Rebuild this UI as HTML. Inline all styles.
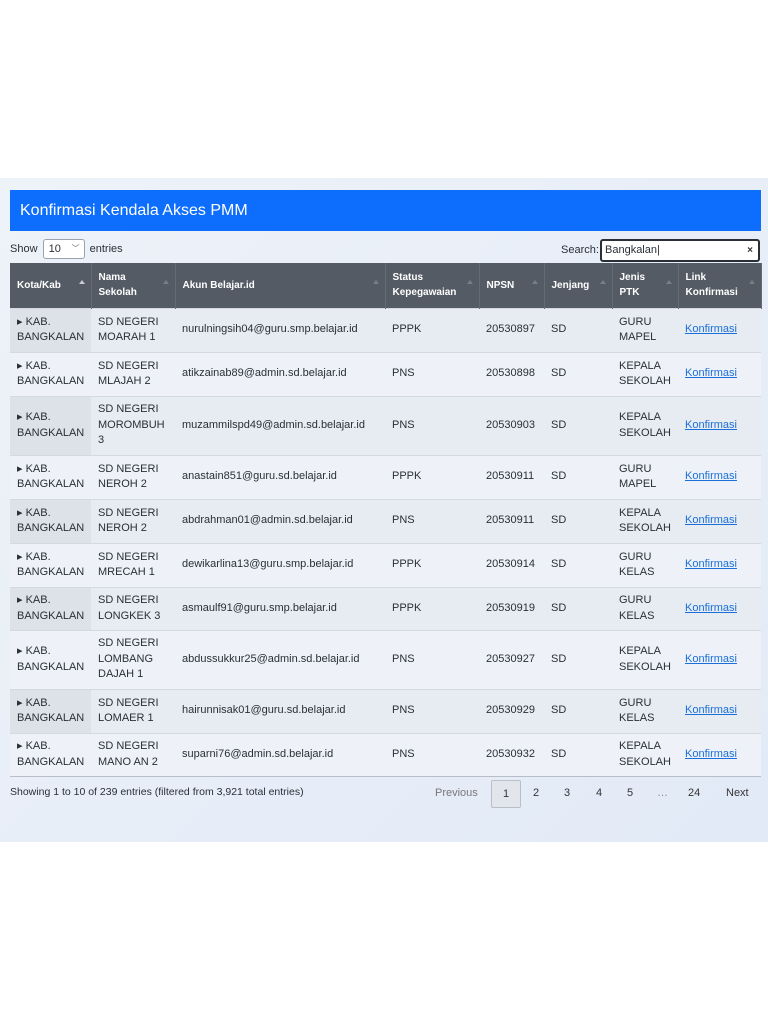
<!DOCTYPE html>
<html><head><style>
*{margin:0;padding:0;box-sizing:border-box}
body{width:768px;height:1024px;background:#fff;font-family:"Liberation Sans",sans-serif;position:relative;overflow:hidden;color:#2a2f36}
.bg{position:absolute;left:0;top:178px;width:768px;height:664px;background:linear-gradient(135deg,#eef2f9,#e2eaf7)}
.hdr{position:absolute;left:10px;top:190px;width:751px;height:41px;background:#0d6efd;color:#fff;font-size:16px;line-height:41px;padding-left:10px}
.show{position:absolute;left:10px;top:239px;font-size:11px;line-height:18px}
.sel{display:inline-block;width:42px;height:20px;border:1px solid #9aa3ad;border-radius:3px;vertical-align:middle;margin:0 2px;padding-left:5px;font-size:11px;line-height:18px;background:#fff;position:relative}
.sel span{position:absolute;right:4px;top:0;font-size:8px;color:#666}
.search{position:absolute;left:561px;top:240px;font-size:11px;line-height:20px}
.inp{position:absolute;left:600px;top:239px;width:160px;height:23px;border:2px solid #2a2f36;border-radius:3px;background:#fff;font-size:11px;line-height:19px;padding-left:3px}
.inp b{position:absolute;right:5px;top:0;font-size:10px;color:#333}
table{position:absolute;left:10px;top:263px;width:751px;border-collapse:collapse;table-layout:fixed;font-size:11px}
th{background:#545b64;color:#fff;text-align:left;font-size:10px;font-weight:bold;height:45px;padding:0 7px;line-height:15px;border-right:1px solid #646b73;position:relative}
th:after{content:"";position:absolute;right:6px;top:17px;width:0;height:0;border-left:3px solid transparent;border-right:3px solid transparent;border-bottom:4px solid #777e86}
th:first-child:after{border-bottom-color:#c8ccd2}
td{padding:0 7px;line-height:15.5px;border-top:1px solid #d4d9e1;vertical-align:middle}
tr.o td{background:#e7ebf2}
tr.o td:first-child{background:#dde1e8}
tr.e td{background:#eef2f8}
a{color:#1a6fd8;text-decoration:underline}
.foot{position:absolute;left:10px;top:786px;font-size:10.5px}
.pg{position:absolute;top:780px;font-size:11px;color:#333;line-height:26px}
.cur{border:1px solid #b9bfc7;background:#e2e6ec;border-radius:2px;width:30px;text-align:center}
</style></head><body>
<div class="bg"></div>
<div class="hdr">Konfirmasi Kendala Akses PMM</div>
<div class="show">Show <span class="sel">10<span>﹀</span></span> entries</div>
<div class="search">Search:</div>
<div class="inp">Bangkalan|<b>×</b></div>
<table>
<colgroup><col style="width:81px"><col style="width:84px"><col style="width:210px"><col style="width:94px"><col style="width:65px"><col style="width:68px"><col style="width:66px"><col style="width:83px"></colgroup>
<tr><th>Kota/Kab</th><th>Nama<br>Sekolah</th><th>Akun Belajar.id</th><th>Status<br>Kepegawaian</th><th>NPSN</th><th>Jenjang</th><th>Jenis<br>PTK</th><th>Link<br>Konfirmasi</th></tr>
<tr class="o" style="height:44px"><td>▸ KAB.<br>BANGKALAN</td><td>SD NEGERI<br>MOARAH 1</td><td>nurulningsih04@guru.smp.belajar.id</td><td>PPPK</td><td>20530897</td><td>SD</td><td>GURU<br>MAPEL</td><td><a>Konfirmasi</a></td></tr>
<tr class="e" style="height:44px"><td>▸ KAB.<br>BANGKALAN</td><td>SD NEGERI<br>MLAJAH 2</td><td>atikzainab89@admin.sd.belajar.id</td><td>PNS</td><td>20530898</td><td>SD</td><td>KEPALA<br>SEKOLAH</td><td><a>Konfirmasi</a></td></tr>
<tr class="o" style="height:59px"><td>▸ KAB.<br>BANGKALAN</td><td>SD NEGERI<br>MOROMBUH<br>3</td><td>muzammilspd49@admin.sd.belajar.id</td><td>PNS</td><td>20530903</td><td>SD</td><td>KEPALA<br>SEKOLAH</td><td><a>Konfirmasi</a></td></tr>
<tr class="e" style="height:44px"><td>▸ KAB.<br>BANGKALAN</td><td>SD NEGERI<br>NEROH 2</td><td>anastain851@guru.sd.belajar.id</td><td>PPPK</td><td>20530911</td><td>SD</td><td>GURU<br>MAPEL</td><td><a>Konfirmasi</a></td></tr>
<tr class="o" style="height:44px"><td>▸ KAB.<br>BANGKALAN</td><td>SD NEGERI<br>NEROH 2</td><td>abdrahman01@admin.sd.belajar.id</td><td>PNS</td><td>20530911</td><td>SD</td><td>KEPALA<br>SEKOLAH</td><td><a>Konfirmasi</a></td></tr>
<tr class="e" style="height:44px"><td>▸ KAB.<br>BANGKALAN</td><td>SD NEGERI<br>MRECAH 1</td><td>dewikarlina13@guru.smp.belajar.id</td><td>PPPK</td><td>20530914</td><td>SD</td><td>GURU<br>KELAS</td><td><a>Konfirmasi</a></td></tr>
<tr class="o" style="height:43px"><td>▸ KAB.<br>BANGKALAN</td><td>SD NEGERI<br>LONGKEK 3</td><td>asmaulf91@guru.smp.belajar.id</td><td>PPPK</td><td>20530919</td><td>SD</td><td>GURU<br>KELAS</td><td><a>Konfirmasi</a></td></tr>
<tr class="e" style="height:59px"><td>▸ KAB.<br>BANGKALAN</td><td>SD NEGERI<br>LOMBANG<br>DAJAH 1</td><td>abdussukkur25@admin.sd.belajar.id</td><td>PNS</td><td>20530927</td><td>SD</td><td>KEPALA<br>SEKOLAH</td><td><a>Konfirmasi</a></td></tr>
<tr class="o" style="height:44px"><td>▸ KAB.<br>BANGKALAN</td><td>SD NEGERI<br>LOMAER 1</td><td>hairunnisak01@guru.sd.belajar.id</td><td>PNS</td><td>20530929</td><td>SD</td><td>GURU<br>KELAS</td><td><a>Konfirmasi</a></td></tr>
<tr class="e" style="height:43px;border-bottom:1px solid #b8bec7"><td>▸ KAB.<br>BANGKALAN</td><td>SD NEGERI<br>MANO AN 2</td><td>suparni76@admin.sd.belajar.id</td><td>PNS</td><td>20530932</td><td>SD</td><td>KEPALA<br>SEKOLAH</td><td><a>Konfirmasi</a></td></tr>
</table>
<div class="foot">Showing 1 to 10 of 239 entries (filtered from 3,921 total entries)</div>
<div class="pg" style="left:435px;color:#777">Previous</div>
<div class="pg cur" style="left:491px">1</div>
<div class="pg" style="left:533px">2</div>
<div class="pg" style="left:564px">3</div>
<div class="pg" style="left:596px">4</div>
<div class="pg" style="left:627px">5</div>
<div class="pg" style="left:657px;color:#888">…</div>
<div class="pg" style="left:688px">24</div>
<div class="pg" style="left:726px">Next</div>
</body></html>
